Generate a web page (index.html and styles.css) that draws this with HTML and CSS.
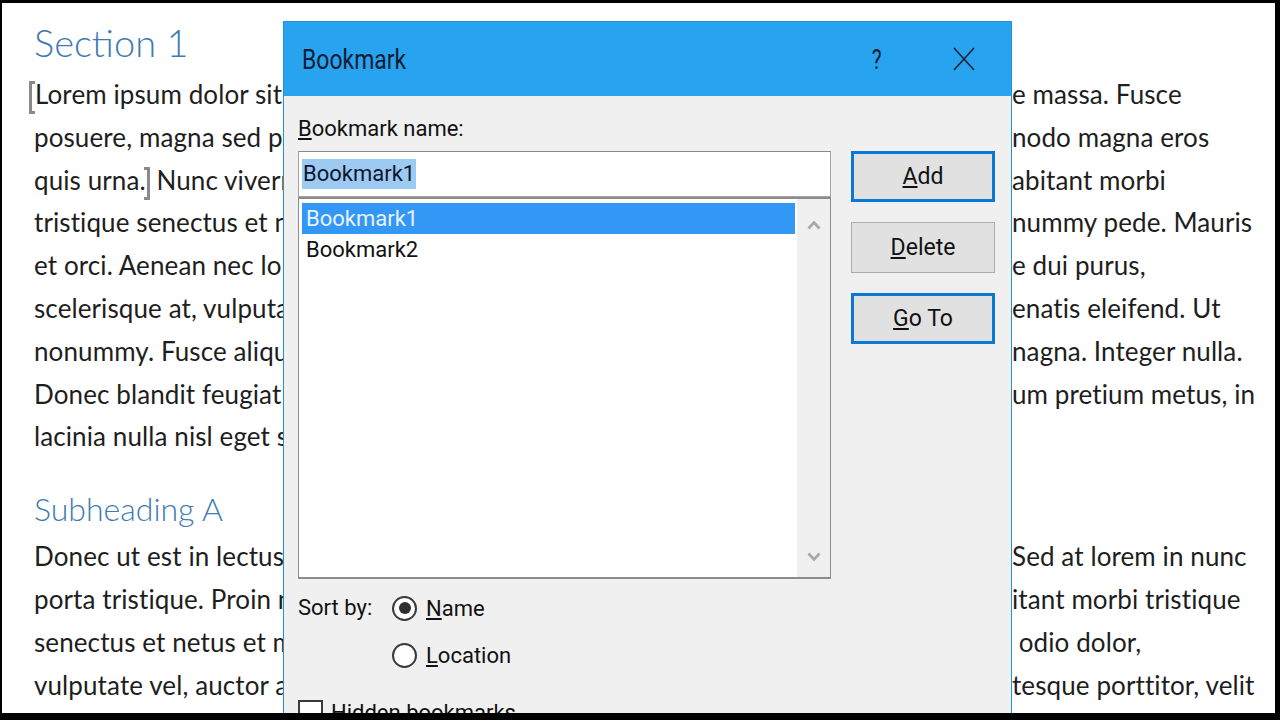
FILE: index.html
```html
<!DOCTYPE html>
<html lang="en">
<head>
  <meta charset="UTF-8">
  <meta name="viewport" content="width=device-width, initial-scale=1.0">
  <title>Bookmark</title>
  <link rel="stylesheet" href="styles.css">
</head>
<body>

  <div class="frame">

    <div class="doc">
      <h1 class="heading-1">Section 1</h1>
      <div class="para">
        <div class="line"><span class="left"><span class="bm-open"></span>Lorem ipsum dolor sit amet,</span><span class="right">e massa. Fusce</span></div>
        <div class="line"><span class="left">posuere, magna sed pulvinar</span><span class="right">nodo magna eros</span></div>
        <div class="line"><span class="left">quis urna.<span class="bm-close"></span> Nunc viverra</span><span class="right">abitant morbi</span></div>
        <div class="line"><span class="left">tristique senectus et netus</span><span class="right">nummy pede. Mauris</span></div>
        <div class="line"><span class="left">et orci. Aenean nec lorem.</span><span class="right">e dui purus,</span></div>
        <div class="line"><span class="left">scelerisque at, vulputate</span><span class="right">enatis eleifend. Ut</span></div>
        <div class="line"><span class="left">nonummy. Fusce aliquet</span><span class="right">nagna. Integer nulla.</span></div>
        <div class="line"><span class="left">Donec blandit feugiat ligula.</span><span class="right">um pretium metus, in</span></div>
        <div class="line"><span class="left">lacinia nulla nisl eget sapien.</span><span class="right"></span></div>
      </div>

      <h2 class="heading-2">Subheading A</h2>
      <div class="para">
        <div class="line"><span class="left">Donec ut est in lectus consequat</span><span class="right">Sed at lorem in nunc</span></div>
        <div class="line"><span class="left">porta tristique. Proin nec</span><span class="right">itant morbi tristique</span></div>
        <div class="line"><span class="left">senectus et netus et malesuada</span><span class="right">&nbsp;odio dolor,</span></div>
        <div class="line"><span class="left">vulputate vel, auctor ac,</span><span class="right">tesque porttitor, velit</span></div>
      </div>
    </div>

    <div class="dialog">
      <div class="titlebar">
        <span class="title">Bookmark</span>
        <span class="help">?</span>
        <svg class="close" width="22" height="24" viewBox="0 0 22 24">
          <path d="M1 1 L21 23 M21 1 L1 23" stroke="#1b2233" stroke-width="1.6" fill="none"/>
        </svg>
      </div>

      <div class="dialog-body">
        <div class="name-label"><u>B</u>ookmark name:</div>

        <div class="field">
          <div class="name-input"><span class="selected-text">Bookmark1</span></div>
          <div class="listbox">
            <div class="items">
              <div class="item item-selected">Bookmark1</div>
              <div class="item">Bookmark2</div>
            </div>
            <div class="scrollbar">
              <svg width="14" height="10" viewBox="0 0 14 10"><path d="M1.5 8.5 L7 2.5 L12.5 8.5" stroke="#a8a8a8" stroke-width="2.6" fill="none"/></svg>
              <svg width="14" height="10" viewBox="0 0 14 10"><path d="M1.5 1.5 L7 7.5 L12.5 1.5" stroke="#a8a8a8" stroke-width="2.6" fill="none"/></svg>
            </div>
          </div>
        </div>

        <div class="buttons">
          <div class="btn btn-default"><u>A</u>dd</div>
          <div class="btn"><u>D</u>elete</div>
          <div class="btn btn-default"><u>G</u>o To</div>
        </div>

        <div class="sort">
          <div class="sort-label">Sort by:</div>
          <div class="options">
            <div class="option"><span class="radio radio-on"></span><span><u>N</u>ame</span></div>
            <div class="option"><span class="radio"></span><span><u>L</u>ocation</span></div>
          </div>
        </div>

        <div class="hidden-row">
          <span class="checkbox"></span><span>Hidden bookmarks</span>
        </div>
      </div>
    </div>

  </div>

</body>
</html>
```

FILE: styles.css
```css
body{
  margin:0;
  background-color:#000;
}
.frame{
  position:relative;
  width:1273px;
  height:710px;
  border-top:3px solid #000;
  border-left:2px solid #000;
  border-bottom:7px solid #000;
  border-right:5px solid #000;
  background-color:#fff;
  overflow:hidden;
  font-family:Lato, "Open Sans", sans-serif;
}

/* document behind the dialog */
.doc{
  padding-left:32px;
  color:#1e1e1e;
}
.heading-1{
  margin:15px 0 7px 0;
  font-size:38px;
  line-height:48px;
  font-weight:300;
  color:#3f7bb3;
}
.heading-2{
  margin:31px 0 6px 0;
  font-size:32px;
  line-height:40px;
  font-weight:300;
  color:#3f7bb3;
}
.line{
  display:grid;
  grid-template-columns:978px 1fr;
  font-size:26px;
  line-height:42.8px;
  letter-spacing:0.1px;
  white-space:nowrap;
}
.bm-open,
.bm-close{
  display:inline-block;
  width:3px;
  height:27px;
  border:3px solid #8a8a8a;
  vertical-align:-10px;
}
.bm-open{
  border-right:none;
  margin-left:-5px;
}
.bm-close{
  border-left:none;
  margin-left:-2px;
}

/* bookmark dialog */
.dialog{
  position:absolute;
  left:281px;
  top:18px;
  width:727px;
  height:720px;
  border:1px solid #1e96d6;
  background-color:#f0f0f0;
  font-family:Roboto, "Noto Sans", sans-serif;
  color:#111;
}
.titlebar{
  display:flex;
  align-items:center;
  height:74px;
  padding:0 36px 0 18px;
  background-color:#27a3ef;
  color:#141c33;
}
.title{
  flex:1;
  font-size:28px;
  transform:scaleX(0.82);
  transform-origin:left center;
}
.help{
  font-size:28px;
  margin-right:70px;
  transform:scaleX(0.75);
}
.close{
  display:block;
}

.dialog-body{
  display:grid;
  grid-template-columns:533px 144px;
  column-gap:20px;
  padding:20px 16px 0 14px;
  font-size:22px;
}
.name-label{
  grid-column:1 / 3;
  height:26px;
  line-height:26px;
  margin-bottom:9px;
}
.field{
  display:flex;
  flex-direction:column;
}
.name-input{
  height:46px;
  box-sizing:border-box;
  border:1px solid #a3a3a3;
  border-top-color:#8a8a8a;
  background-color:#fff;
  padding:7px 0 0 3px;
}
.selected-text{
  display:inline-block;
  background-color:#9ccaf0;
  line-height:30px;
  padding:0 1px;
  color:#0e1630;
}
.listbox{
  display:grid;
  grid-template-columns:1fr 33px;
  column-gap:2px;
  height:382px;
  box-sizing:border-box;
  border:1px solid #8c8c8c;
  border-top-width:2px;
  border-bottom-width:2px;
  background-color:#fff;
  padding:4px 0 0 3px;
}
.item{
  height:31px;
  line-height:31px;
  padding-left:4px;
}
.item-selected{
  background-color:#3397f5;
  color:#e9f2ff;
}
.scrollbar{
  display:flex;
  flex-direction:column;
  justify-content:space-between;
  align-items:center;
  background-color:#f0f0f0;
  padding:21px 0 15px 0;
  margin-top:-4px;
}
.scrollbar svg{
  display:block;
}

.buttons{
  display:flex;
  flex-direction:column;
  gap:20px;
}
.btn{
  height:51px;
  box-sizing:border-box;
  border:1px solid #adadad;
  background-color:#e1e1e1;
  display:flex;
  align-items:center;
  justify-content:center;
  font-size:23px;
}
.btn-default{
  border:3px solid #0a78d4;
}

.sort{
  grid-column:1 / 3;
  display:grid;
  grid-template-columns:94px 1fr;
  margin-top:11px;
}
.sort-label{
  line-height:36px;
}
.options{
  display:flex;
  flex-direction:column;
  gap:11px;
}
.option{
  display:flex;
  align-items:center;
  gap:9px;
  height:36px;
}
.radio{
  display:flex;
  align-items:center;
  justify-content:center;
  width:21px;
  height:21px;
  border:2px solid #3a3a3a;
  border-radius:50%;
  background-color:#fff;
}
.radio-on::after{
  content:"";
  width:12px;
  height:12px;
  border-radius:50%;
  background-color:#2e2e2e;
}
.hidden-row{
  grid-column:1 / 3;
  display:flex;
  align-items:center;
  gap:8px;
  margin-top:27px;
}
.checkbox{
  width:21px;
  height:21px;
  border:2px solid #3a3a3a;
  background-color:#fff;
}
```
